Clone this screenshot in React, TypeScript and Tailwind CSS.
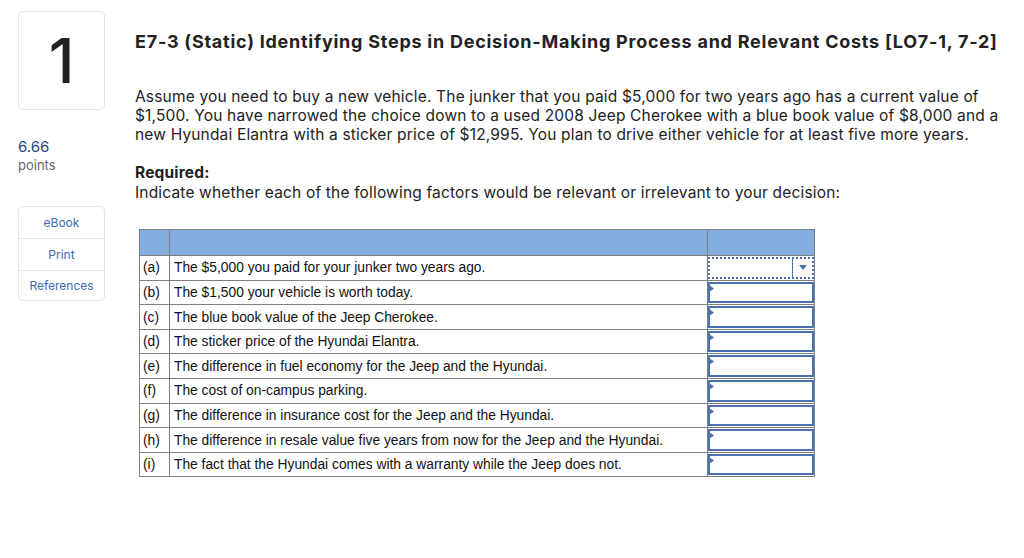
import React from 'react';

const rows: [string, string][] = [
  ['(a)', 'The $5,000 you paid for your junker two years ago.'],
  ['(b)', 'The $1,500 your vehicle is worth today.'],
  ['(c)', 'The blue book value of the Jeep Cherokee.'],
  ['(d)', 'The sticker price of the Hyundai Elantra.'],
  ['(e)', 'The difference in fuel economy for the Jeep and the Hyundai.'],
  ['(f)', 'The cost of on-campus parking.'],
  ['(g)', 'The difference in insurance cost for the Jeep and the Hyundai.'],
  ['(h)', 'The difference in resale value five years from now for the Jeep and the Hyundai.'],
  ['(i)', 'The fact that the Hyundai comes with a warranty while the Jeep does not.'],
];

function AnswerCell({ first }: { first: boolean }) {
  if (first) {
    return (
      <div className="relative h-full border-[2px] border-dotted border-[#4a72b0] bg-white">
        <div className="absolute right-0 top-0 flex h-full w-[20px] items-center justify-center border-l border-[#4a72b0]">
          <svg width="8" height="5" viewBox="0 0 8 5">
            <path d="M0 0 L8 0 L4 5 Z" fill="#4a72b0" />
          </svg>
        </div>
      </div>
    );
  }
  return (
    <div className="relative h-full border-[2px] border-[#4a72b0] bg-white">
      <svg className="absolute left-[-1px] top-[1px]" width="5" height="7" viewBox="0 0 5 7">
        <path d="M0 0 L5 3.5 L0 7 Z" fill="#4a72b0" />
      </svg>
    </div>
  );
}

export default function App() {
  return (
    <main className="flex h-[558px] w-[1024px] bg-white font-['Inter',sans-serif] text-[#222]">
      <aside className="w-[135px] shrink-0 pl-[18px] pt-[11px]">
        <div className="flex h-[99px] w-[87px] items-center justify-center rounded-[5px] border border-[#e3e3e3]">
          <span className="text-[62px] font-medium leading-none text-[#222]">1</span>
        </div>
        <div className="mt-[28px] text-[15px] leading-[18px] text-[#1f4a86]">6.66</div>
        <div className="text-[13px] leading-[18px] text-[#666]">points</div>
        <div className="mt-[32px] flex w-[87px] flex-col rounded-[5px] border border-[#e3e3e3] text-[12px] text-[#3b6cb4]">
          <div className="flex h-[32px] items-center justify-center border-b border-[#e3e3e3]">eBook</div>
          <div className="flex h-[32px] items-center justify-center border-b border-[#e3e3e3]">Print</div>
          <div className="flex h-[29px] items-center justify-center">References</div>
        </div>
      </aside>
      <section className="flex-1">
        <h1 className="mt-[30px] whitespace-nowrap text-[18px] font-bold leading-[24px] tracking-[0.75px] text-[#222]">
          E7-3 (Static) Identifying Steps in Decision-Making Process and Relevant Costs [LO7-1, 7-2]
        </h1>
        <p className="mt-[33px] whitespace-nowrap text-[15.5px] leading-[19px] tracking-[0.17px]">
          Assume you need to buy a new vehicle. The junker that you paid $5,000 for two years ago has a current value of
          <br />
          $1,500. You have narrowed the choice down to a used 2008 Jeep Cherokee with a blue book value of $8,000 and a
          <br />
          new Hyundai Elantra with a sticker price of $12,995. You plan to drive either vehicle for at least five more years.
        </p>
        <p className="mt-[19px] text-[15.5px] font-bold leading-[19px] tracking-[0.17px]">Required:</p>
        <p className="mt-[1px] text-[15.5px] leading-[19px] tracking-[0.17px]">
          Indicate whether each of the following factors would be relevant or irrelevant to your decision:
        </p>
        <div className="ml-[4px] mt-[27px] w-[676px] border border-[#808080] font-['Liberation_Sans',Arial,sans-serif] text-[13.8px] text-[#111]">
          <div className="flex h-[25px] bg-[#84ade0]">
            <div className="w-[30px] border-r border-[#808080]" />
            <div className="w-[538px] border-r border-[#808080]" />
            <div className="flex-1" />
          </div>
          {rows.map(([k, t], i) => (
            <div key={k} className="flex h-[24.6px] border-t border-[#808080]">
              <div className="flex w-[30px] items-center border-r border-[#808080] pl-[3px] pt-[2px]">{k}</div>
              <div className="flex w-[538px] items-center border-r border-[#808080] pl-[4px] pt-[2px]">{t}</div>
              <div className="flex-1 py-[1px]">
                <AnswerCell first={i === 0} />
              </div>
            </div>
          ))}
        </div>
      </section>
    </main>
  );
}
